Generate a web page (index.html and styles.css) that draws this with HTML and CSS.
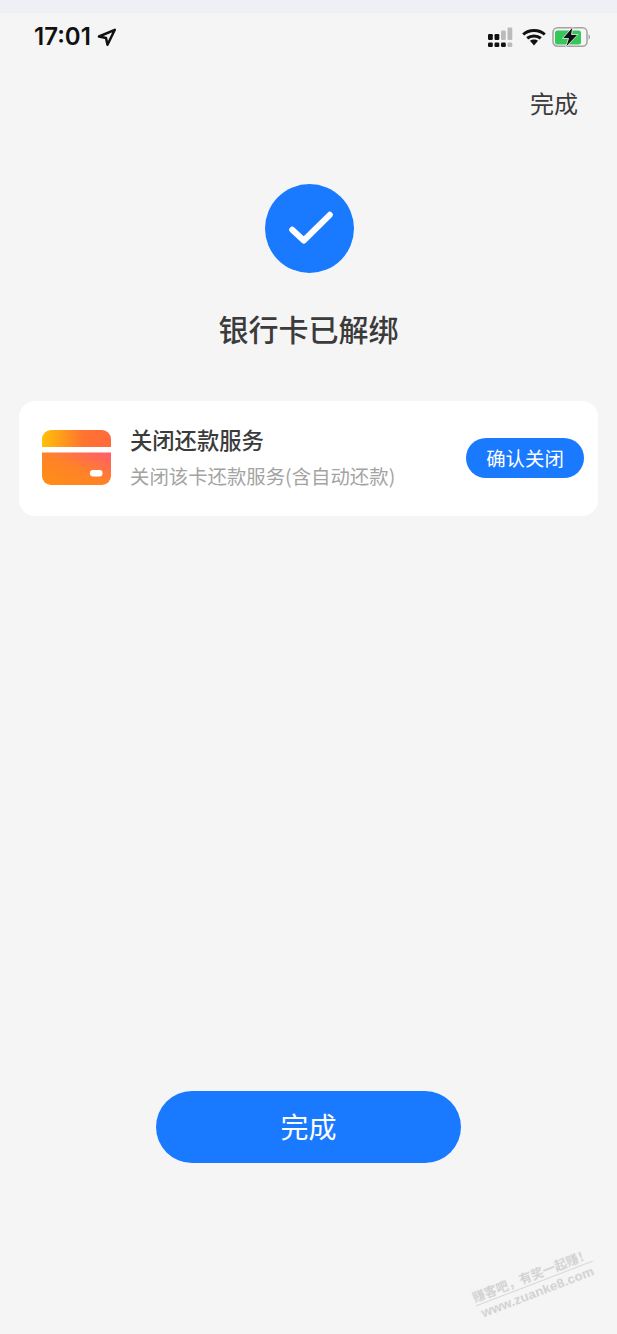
FILE: index.html
```html
<!DOCTYPE html>
<html>
	<head>
		<meta charset="utf-8" />
		<title>银行卡已解绑</title>
		<link rel="stylesheet" href="styles.css">
	</head>
	<body>
		<div class="page">
			<div class="topStrip"></div>
			<div class="statusBar">
				<div class="timeWrap">
					<span class="time">17:01</span>
					<svg class="arrow" width="20" height="20" viewBox="0 0 20 20">
						<path d="M3 9.500 18.800 2.800 11.500 17.800 10 11Z" fill="none" stroke="#111" stroke-width="2.500" stroke-linejoin="round"/>
					</svg>
				</div>
				<div class="statusIcons">
					<svg width="25" height="20" viewBox="0 0 25 20">
						<rect x="0" y="7" width="4.800" height="6" rx="1.200" fill="#111"/>
						<rect x="0" y="15.500" width="4.800" height="4.500" rx="1.200" fill="#111"/>
						<rect x="6.500" y="7" width="4.800" height="6" rx="1.200" fill="#111"/>
						<rect x="6.500" y="15.500" width="4.800" height="4.500" rx="1.200" fill="#111"/>
						<rect x="13" y="3.500" width="4.800" height="9.500" rx="1.200" fill="#bbb"/>
						<rect x="13" y="15.500" width="4.800" height="4.500" rx="1.200" fill="#111"/>
						<rect x="19.500" y="0.500" width="4.800" height="12.500" rx="1.200" fill="#bbb"/>
						<rect x="19.500" y="15.500" width="4.800" height="4.500" rx="1.200" fill="#bbb"/>
					</svg>
					<svg class="wifi" width="24" height="18" viewBox="0 0 24 18">
						<path d="M1.200 6.500C7 1.200 17 1.200 22.800 6.500" fill="none" stroke="#111" stroke-width="3"/>
						<path d="M5.200 10.200C9 7.200 15 7.200 18.800 10.200" fill="none" stroke="#111" stroke-width="3"/>
						<path d="M8 12.800C10 11 14 11 16 12.800L12 17.500Z" fill="#111"/>
					</svg>
					<svg class="battery" width="40" height="22" viewBox="0 0 40 22">
						<rect x="1" y="1.800" width="34" height="18.400" rx="4.500" fill="none" stroke="#a3a3a3" stroke-width="1.500"/>
						<rect x="3" y="4.500" width="26" height="14" rx="2.500" fill="#34c759"/>
						<path d="M36.500 8.500c2 .5 2 4.500 0 5Z" fill="#a3a3a3"/>
						<path d="M21 0.500 10.500 12.500H16.500L13.500 21.500 26 8.500H19.500Z" fill="#111" stroke="#f5f5f5" stroke-width="0.800"/>
					</svg>
				</div>
			</div>
			<div class="navBar"><span class="navDone">完成</span></div>

			<div class="result">
				<div class="okCircle">
					<svg width="46" height="36" viewBox="0 0 46 36">
						<path d="M5.200 18.800 16.800 29.500 42.800 3.800" fill="none" stroke="#fff" stroke-width="6" stroke-linecap="round" stroke-linejoin="round"/>
					</svg>
				</div>
				<h1 class="resultTitle">银行卡已解绑</h1>
			</div>

			<div class="card">
				<svg class="cardIcon" width="69" height="55" viewBox="0 0 69 55">
					<defs>
						<linearGradient id="topGrad" x1="0" y1="0" x2="1" y2="0">
							<stop offset="0" stop-color="#ffc107"/>
							<stop offset="0.6" stop-color="#ff7330"/>
							<stop offset="1" stop-color="#ff6a3c"/>
						</linearGradient>
						<linearGradient id="bottomGrad" x1="0" y1="1" x2="1" y2="0">
							<stop offset="0" stop-color="#ff8f14"/>
							<stop offset="0.5" stop-color="#ff8228"/>
							<stop offset="1" stop-color="#ff5c6c"/>
						</linearGradient>
					</defs>
					<path d="M0 17V9a9 9 0 0 1 9-9H60a9 9 0 0 1 9 9V17Z" fill="url(#topGrad)"/>
					<path d="M0 22.500H69V46a9 9 0 0 1-9 9H9a9 9 0 0 1-9-9Z" fill="url(#bottomGrad)"/>
					<rect x="48" y="40" width="12.500" height="6.500" rx="3" fill="#fff"/>
				</svg>
				<div class="cardText">
					<div class="cardTitle">关闭还款服务</div>
					<div class="cardSub">关闭该卡还款服务(含自动还款)</div>
				</div>
				<div class="confirmBtn">确认关闭</div>
			</div>

			<div class="doneBtn">完成</div>

			<div class="watermark">
				<div class="wmTop">赚客吧，有奖一起赚！</div>
				<div class="wmUrl">www.zuanke8.com</div>
			</div>
		</div>
	</body>
</html>
```
FILE: styles.css
```css
*{
	box-sizing: border-box;
}
html,body{
	margin: 0;
	padding: 0;
}
body{
	background: #f5f5f5;
	font-family: "Noto Sans CJK SC", "Noto Sans", sans-serif;
}
.page{
	position: relative;
	width: 617px;
	height: 1334px;
	overflow: hidden;
	display: flex;
	flex-direction: column;
}
.topStrip{
	height: 13px;
	background: #eff0f5;
}
.statusBar{
	height: 47px;
	display: flex;
	align-items: center;
	justify-content: space-between;
	padding: 0 25px 0 34px;
}
.timeWrap{
	display: flex;
	align-items: center;
	gap: 5px;
}
.time{
	font: 600 24px/30px Inter, sans-serif;
	color: #111;
}
.statusIcons{
	display: flex;
	align-items: center;
}
.wifi{
	margin: 0 6.500px 0 8.500px;
}
.navBar{
	height: 60px;
	display: flex;
	justify-content: flex-end;
	padding: 26px 39px 0 0;
}
.navDone{
	font-size: 24px;
	line-height: 34px;
	color: #3b3b3b;
}
.result{
	display: flex;
	flex-direction: column;
	align-items: center;
	padding-top: 64px;
}
.okCircle{
	width: 89px;
	height: 89px;
	margin-left: 2px;
	border-radius: 50%;
	background: #1a7aff;
	display: flex;
	align-items: center;
	justify-content: center;
}
.resultTitle{
	margin: 33px 0 0;
	font-size: 30px;
	line-height: 44px;
	font-weight: 500;
	color: #3b3b3b;
}
.card{
	height: 115px;
	margin: 51px 19px 0;
	padding: 0 14px 2px 23px;
	background: #fff;
	border-radius: 16px;
	display: flex;
	align-items: center;
}
.cardIcon{
	flex: none;
}
.cardText{
	flex: 1;
	margin-left: 19px;
	padding-bottom: 2px;
}
.cardTitle{
	font-size: 22.300px;
	line-height: 32px;
	font-weight: 500;
	color: #3b3b3b;
}
.cardSub{
	margin-top: 7px;
	font-size: 19.400px;
	line-height: 28px;
	color: #a3a3a3;
}
.confirmBtn{
	width: 118px;
	height: 40px;
	border-radius: 20px;
	background: #1a7aff;
	color: #fff;
	font-size: 19.400px;
	line-height: 40px;
	text-align: center;
}
.doneBtn{
	width: 305px;
	height: 72px;
	margin: 575px 0 0 156px;
	border-radius: 36px;
	background: #1a7aff;
	color: #fff;
	font-size: 28px;
	line-height: 70px;
	text-align: center;
}
.watermark{
	position: absolute;
	left: 472px;
	top: 1267px;
	width: 125px;
	transform: rotate(-21deg);
	color: #d0d0d0;
	text-align: center;
	white-space: nowrap;
	filter: blur(0.4px);
}
.wmTop{
	font-size: 12.500px;
	line-height: 16px;
	font-weight: 700;
	border-bottom: 1px solid #d6d6d6;
}
.wmUrl{
	font: 700 13.500px/17px "Liberation Sans", sans-serif;
}
```
